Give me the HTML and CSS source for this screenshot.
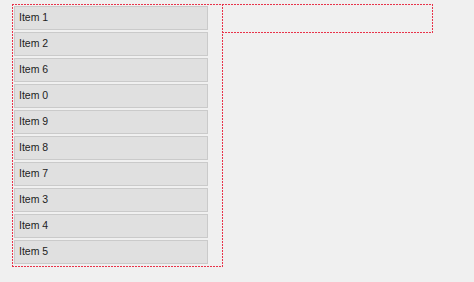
FILE: index.html
```html
<!DOCTYPE html>
<html>
<head>
<meta charset="utf-8">
<link rel="stylesheet" href="styles.css">
</head>
<body>
<div class="board">
  <div class="list">
    <div class="item">Item 1</div>
    <div class="item">Item 2</div>
    <div class="item">Item 6</div>
    <div class="item">Item 0</div>
    <div class="item">Item 9</div>
    <div class="item">Item 8</div>
    <div class="item">Item 7</div>
    <div class="item">Item 3</div>
    <div class="item">Item 4</div>
    <div class="item">Item 5</div>
  </div>
  <div class="list list-empty"></div>
</div>
</body>
</html>
```
FILE: styles.css
```css
html, body {
  margin: 0;
  padding: 0;
  background: #f0f0f0;
  font-family: "Liberation Sans", Arial, sans-serif;
}
.board {
  display: flex;
  align-items: flex-start;
  padding: 4px 0 0 12px;
}
.list {
  box-sizing: border-box;
  width: 211px;
  padding: 2px 2px 3px 2px;
  display: flex;
  flex-direction: column;
  gap: 2px;
  background-color: #f0f0f0;
  background-image:
    repeating-linear-gradient(90deg, #e8334a 0px, #e8334a 2px, #f0f0f0 2px, #f0f0f0 3px),
    repeating-linear-gradient(90deg, #e8334a 0px, #e8334a 2px, #f0f0f0 2px, #f0f0f0 3px),
    repeating-linear-gradient(180deg, #e8334a 0px, #e8334a 2px, #f0f0f0 2px, #f0f0f0 3px),
    repeating-linear-gradient(180deg, #e8334a 0px, #e8334a 2px, #f0f0f0 2px, #f0f0f0 3px);
  background-size: 100% 1px, 100% 1px, 1px 100%, 1px 100%;
  background-position: 0 0, 0 100%, 0 0, 100% 0;
  background-repeat: no-repeat;
}
.list-empty {
  width: 211px;
  height: 29px;
  padding: 0;
  margin-left: -1px;
}
.item {
  width: 188px;
  height: 22px;
  border: 1px solid #cacaca;
  background: #e0e0e0;
  color: #222;
  font-size: 10.5px;
  line-height: 21px;
  padding-left: 4px;
  box-sizing: content-box;
}
```
